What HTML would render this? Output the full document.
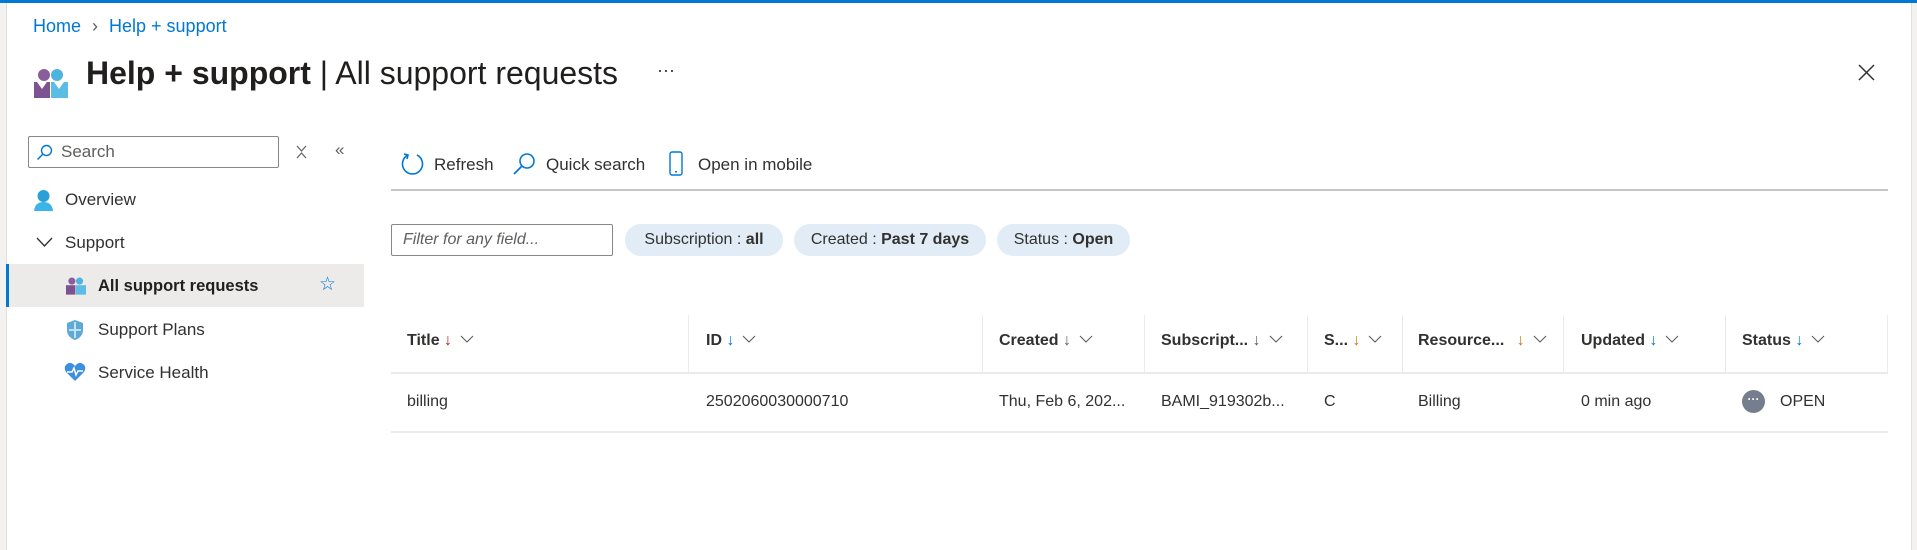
<!DOCTYPE html>
<html><head><meta charset="utf-8"><style>
*{margin:0;padding:0;box-sizing:border-box}
body{width:1917px;height:550px;overflow:hidden;background:#fff;font-family:"Liberation Sans",sans-serif;color:#323130;position:relative}
.a{position:absolute;white-space:nowrap}
.t{font-size:17px;line-height:20px}
.pill{position:absolute;top:224px;height:32px;border-radius:16px;background:#e1ecf7;font-size:16px;line-height:32px;text-align:center;color:#323130}
.sep{position:absolute;top:315px;height:57px;width:1px;background:#edebe9}
.h{position:absolute;top:331px;font-size:16px;font-weight:bold;line-height:20px;white-space:nowrap;color:#323130}
.h span{font-weight:normal}
.h svg{margin-left:8px;vertical-align:2px}
.d{position:absolute;top:392px;font-size:16px;line-height:20px;white-space:nowrap}
</style></head><body>
<div class="a" style="left:0;top:0;width:1917px;height:3px;background:#0078d4"></div>
<div class="a" style="left:0;top:3px;width:6px;height:547px;background:#f3f2f1"></div>
<div class="a" style="left:6px;top:3px;width:1px;height:547px;background:#e1dfdd"></div>
<div class="a" style="left:1911px;top:3px;width:1px;height:547px;background:#e1dfdd"></div>
<div class="a" style="left:1912px;top:3px;width:5px;height:547px;background:#f3f2f1"></div>

<div class="a" style="left:33px;top:15px;font-size:18px;line-height:22px;color:#0078d4">Home <span style="color:#605e5c;margin:0 6px">›</span> Help + support</div>

<svg class="a" style="left:34px;top:67px" width="34" height="31" viewBox="0 0 34 31">
<circle cx="10" cy="8" r="6" fill="#8a5e9c"/><circle cx="23" cy="8" r="6" fill="#4fb3e0"/>
<rect x="0" y="15" width="16" height="16" fill="#7d5290"/><rect x="17" y="15" width="17" height="16" fill="#5bbce6"/>
<path d="M3 15 L8 22 L13 15Z M20 15 L25 22 L30 15Z" fill="#fff"/></svg>
<div class="a" style="left:86px;top:54px;font-size:32px;line-height:38px;color:#201f1e"><b>Help + support</b> | All support requests</div>
<div class="a" style="left:657px;top:60px;font-size:18px;color:#323130">···</div>
<svg class="a" style="left:1858px;top:64px" width="17" height="17"><path d="M1 1L16 16M16 1L1 16" stroke="#323130" stroke-width="1.5"/></svg>

<div class="a" style="left:28px;top:136px;width:251px;height:32px;border:1px solid #8a8886;border-radius:2px"></div>
<svg class="a" style="left:36px;top:144px" width="17" height="17"><circle cx="10.5" cy="6.5" r="5" fill="none" stroke="#0078d4" stroke-width="1.4"/><path d="M7 10L1.5 15.5" stroke="#0078d4" stroke-width="1.5"/></svg>
<div class="a t" style="left:61px;top:142px;color:#605e5c">Search</div>
<svg class="a" style="left:296px;top:145px" width="11" height="14"><path d="M1 1L5.5 6L10 1M1 13L5.5 8L10 13" fill="none" stroke="#605e5c" stroke-width="1.2"/></svg>
<div class="a" style="left:335px;top:140px;font-size:17px;color:#605e5c">«</div>

<svg class="a" style="left:34px;top:189px" width="19" height="22"><circle cx="9.5" cy="7" r="6" fill="#2aa0d8"/><path d="M0 22 Q1 13 9.5 13 Q18 13 19 22Z" fill="#3ab5e6"/></svg>
<div class="a t" style="left:65px;top:190px">Overview</div>
<svg class="a" style="left:36px;top:237px" width="17" height="11"><path d="M1 1L8.5 9L16 1" fill="none" stroke="#323130" stroke-width="1.3"/></svg>
<div class="a t" style="left:65px;top:233px">Support</div>

<div class="a" style="left:6px;top:264px;width:358px;height:43px;background:#edebe9"></div>
<div class="a" style="left:6px;top:264px;width:3px;height:43px;background:#0078d4"></div>
<svg class="a" style="left:66px;top:276px" width="20" height="19" viewBox="0 0 34 31">
<circle cx="10" cy="8" r="6" fill="#8a5e9c"/><circle cx="23" cy="8" r="6" fill="#4fb3e0"/>
<rect x="0" y="15" width="16" height="16" fill="#7d5290"/><rect x="17" y="15" width="17" height="16" fill="#5bbce6"/></svg>
<div class="a t" style="left:98px;top:276px;color:#201f1e;font-weight:bold;font-size:16.5px">All support requests</div>
<div class="a" style="left:319px;top:273px;font-size:19px;color:#0078d4">☆</div>

<svg class="a" style="left:66px;top:319px" width="18" height="22"><path d="M9 1L17 4V11Q17 18 9 21Q1 18 1 11V4Z" fill="#5ea9d8"/><path d="M9 3V19M3 11H15" stroke="#bfe3f5" stroke-width="2"/></svg>
<div class="a t" style="left:98px;top:320px">Support Plans</div>
<svg class="a" style="left:64px;top:362px" width="22" height="20"><path d="M11 19L2 10Q-1 5 3 2Q7 -1 11 4Q15 -1 19 2Q23 5 20 10Z" fill="#3b8fe0"/><path d="M3 10H8L10 6L12 13L14 9H19" fill="none" stroke="#fff" stroke-width="1.5"/></svg>
<div class="a t" style="left:98px;top:363px">Service Health</div>

<svg class="a" style="left:401px;top:152px" width="23" height="24"><path d="M7 3A10 10 0 1 0 16 3" fill="none" stroke="#0078d4" stroke-width="1.6"/><path d="M3 2L7 3L6 7" fill="none" stroke="#0078d4" stroke-width="1.6"/></svg>
<div class="a t" style="left:434px;top:155px">Refresh</div>
<svg class="a" style="left:512px;top:152px" width="24" height="24"><circle cx="15" cy="9" r="7" fill="none" stroke="#0078d4" stroke-width="1.6"/><path d="M10 14L2 22" stroke="#0078d4" stroke-width="1.8"/></svg>
<div class="a t" style="left:546px;top:155px">Quick search</div>
<svg class="a" style="left:669px;top:151px" width="14" height="25"><rect x="1" y="1" width="12" height="23" rx="2" fill="none" stroke="#0078d4" stroke-width="1.4"/><rect x="6" y="20" width="2" height="1.5" fill="#0078d4"/></svg>
<div class="a t" style="left:698px;top:155px">Open in mobile</div>
<div class="a" style="left:391px;top:189px;width:1497px;height:2px;background:#c8c6c4"></div>

<div class="a" style="left:391px;top:224px;width:222px;height:32px;border:1px solid #8a8886;border-radius:2px"></div>
<div class="a" style="left:403px;top:231px;font-size:16px;font-style:italic;color:#605e5c">Filter for any field...</div>
<div class="pill" style="left:625px;width:158px">Subscription : <b>all</b></div>
<div class="pill" style="left:794px;width:192px">Created : <b>Past 7 days</b></div>
<div class="pill" style="left:997px;width:133px">Status : <b>Open</b></div>

<div class="sep" style="left:688px"></div><div class="sep" style="left:982px"></div><div class="sep" style="left:1144px"></div>
<div class="sep" style="left:1307px"></div><div class="sep" style="left:1402px"></div><div class="sep" style="left:1563px"></div>
<div class="sep" style="left:1725px"></div><div class="sep" style="left:1887px"></div>
<div class="a" style="left:391px;top:372px;width:1497px;height:2px;background:#edebe9"></div>
<div class="a" style="left:391px;top:431px;width:1497px;height:2px;background:#edebe9"></div>

<div class="h" style="left:407px">Title <span style="color:#a4262c">↓</span><svg width="14" height="8"><path d="M1 1L7 7L13 1" fill="none" stroke="#605e5c" stroke-width="1.1"/></svg></div>
<div class="h" style="left:706px">ID <span style="color:#0078d4">↓</span><svg width="14" height="8"><path d="M1 1L7 7L13 1" fill="none" stroke="#605e5c" stroke-width="1.1"/></svg></div>
<div class="h" style="left:999px">Created <span style="color:#605e5c">↓</span><svg width="14" height="8"><path d="M1 1L7 7L13 1" fill="none" stroke="#605e5c" stroke-width="1.1"/></svg></div>
<div class="h" style="left:1161px">Subscript... <span style="color:#605e5c">↓</span><svg width="14" height="8"><path d="M1 1L7 7L13 1" fill="none" stroke="#605e5c" stroke-width="1.1"/></svg></div>
<div class="h" style="left:1324px">S... <span style="color:#c47b1a">↓</span><svg width="14" height="8"><path d="M1 1L7 7L13 1" fill="none" stroke="#605e5c" stroke-width="1.1"/></svg></div>
<div class="h" style="left:1418px">Resource... <span style="color:#c47b1a;margin-left:8px">↓</span><svg width="14" height="8"><path d="M1 1L7 7L13 1" fill="none" stroke="#605e5c" stroke-width="1.1"/></svg></div>
<div class="h" style="left:1581px">Updated <span style="color:#0078d4">↓</span><svg width="14" height="8"><path d="M1 1L7 7L13 1" fill="none" stroke="#605e5c" stroke-width="1.1"/></svg></div>
<div class="h" style="left:1742px">Status <span style="color:#0078d4">↓</span><svg width="14" height="8"><path d="M1 1L7 7L13 1" fill="none" stroke="#605e5c" stroke-width="1.1"/></svg></div>

<div class="d" style="left:407px">billing</div>
<div class="d" style="left:706px">2502060030000710</div>
<div class="d" style="left:999px">Thu, Feb 6, 202...</div>
<div class="d" style="left:1161px">BAMI_919302b...</div>
<div class="d" style="left:1324px">C</div>
<div class="d" style="left:1418px">Billing</div>
<div class="d" style="left:1581px">0 min ago</div>
<div class="a" style="left:1742px;top:390px;width:23px;height:23px;border-radius:50%;background:#747e8c;color:#fff;font-size:12px;line-height:18px;text-align:center;font-weight:bold">···</div>
<div class="d" style="left:1780px">OPEN</div>
</body></html>
